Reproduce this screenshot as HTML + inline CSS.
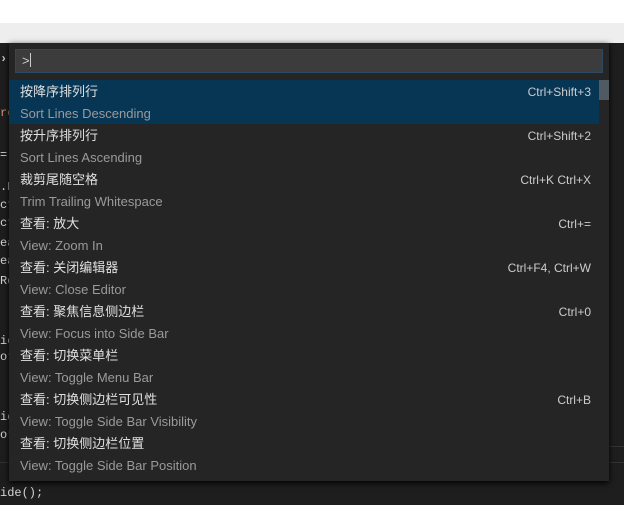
<!DOCTYPE html>
<html><head><style>
body{margin:0;width:624px;height:505px;overflow:hidden;background:#1e1e1e;font-family:"Liberation Sans","Noto Sans CJK SC",sans-serif;position:relative}
.top{position:absolute;left:0;top:0;width:624px;height:23px;background:#fff}
.bar{position:absolute;left:0;top:23px;width:624px;height:20px;background:#eeeeee}
.code{position:absolute;left:0;font:12px "Liberation Mono",monospace;color:#d4d4d4}
.w{position:absolute;left:9px;top:43px;width:600px;height:438px;background:#252526;box-shadow:0 2px 6px #000}
.inp{position:absolute;left:6px;top:6px;background:#3c3c3c;border:1px solid #2c4a63;color:#ccc;font-size:13px;line-height:22px;padding-left:6px;box-sizing:border-box;width:588px;height:24px}
.item{position:absolute;left:0;width:590px;height:44px}
.item.sel{background:#073655}
.l{position:absolute;left:11px;top:3px;font-size:13px;color:#e0e0e0;line-height:18px}
.d{position:absolute;left:11px;top:25px;font-size:13px;color:#9a9a9a;line-height:18px}
.k{position:absolute;right:8px;top:4px;font-size:12px;color:#cccccc;line-height:16px}
.sb{position:absolute;left:590px;top:37px;width:10px;height:20px;background:#4f5a63}
</style></head><body>
<div class="top"></div><div class="bar"></div>
<div class="code" style="top:52px;color:#ccc;font-weight:bold">›</div>
<div class="code" style="top:106px;color:#ce9178">re</div>
<div class="code" style="top:148px">=</div>
<div class="code" style="top:180px">.P</div>
<div class="code" style="top:198px">ct</div>
<div class="code" style="top:216px">ct</div>
<div class="code" style="top:236px">ea</div>
<div class="code" style="top:254px">ea</div>
<div class="code" style="top:274px">Re</div>
<div class="code" style="top:334px">ic</div>
<div class="code" style="top:350px">or</div>
<div class="code" style="top:410px">ic</div>
<div class="code" style="top:428px">or</div>
<div class="code" style="top:486px">ide();</div>
<div style="position:absolute;left:0;top:462px;width:624px;height:1px;background:#333"></div>
<div style="position:absolute;left:609px;top:446px;width:15px;height:1px;background:#333"></div>
<div class="w">
<div class="inp">&gt;<span style="display:inline-block;width:1px;height:14px;background:#ccc;vertical-align:-2px"></span></div>
<div class="item sel" style="top:37px"><div class="l">按降序排列行</div><div class="d">Sort Lines Descending</div><div class="k">Ctrl+Shift+3</div></div>
<div class="item" style="top:81px"><div class="l">按升序排列行</div><div class="d">Sort Lines Ascending</div><div class="k">Ctrl+Shift+2</div></div>
<div class="item" style="top:125px"><div class="l">裁剪尾随空格</div><div class="d">Trim Trailing Whitespace</div><div class="k">Ctrl+K Ctrl+X</div></div>
<div class="item" style="top:169px"><div class="l">查看: 放大</div><div class="d">View: Zoom In</div><div class="k">Ctrl+=</div></div>
<div class="item" style="top:213px"><div class="l">查看: 关闭编辑器</div><div class="d">View: Close Editor</div><div class="k">Ctrl+F4, Ctrl+W</div></div>
<div class="item" style="top:257px"><div class="l">查看: 聚焦信息侧边栏</div><div class="d">View: Focus into Side Bar</div><div class="k">Ctrl+0</div></div>
<div class="item" style="top:301px"><div class="l">查看: 切换菜单栏</div><div class="d">View: Toggle Menu Bar</div></div>
<div class="item" style="top:345px"><div class="l">查看: 切换侧边栏可见性</div><div class="d">View: Toggle Side Bar Visibility</div><div class="k">Ctrl+B</div></div>
<div class="item" style="top:389px"><div class="l">查看: 切换侧边栏位置</div><div class="d">View: Toggle Side Bar Position</div></div>
<div class="sb"></div>
</div>
</body></html>
